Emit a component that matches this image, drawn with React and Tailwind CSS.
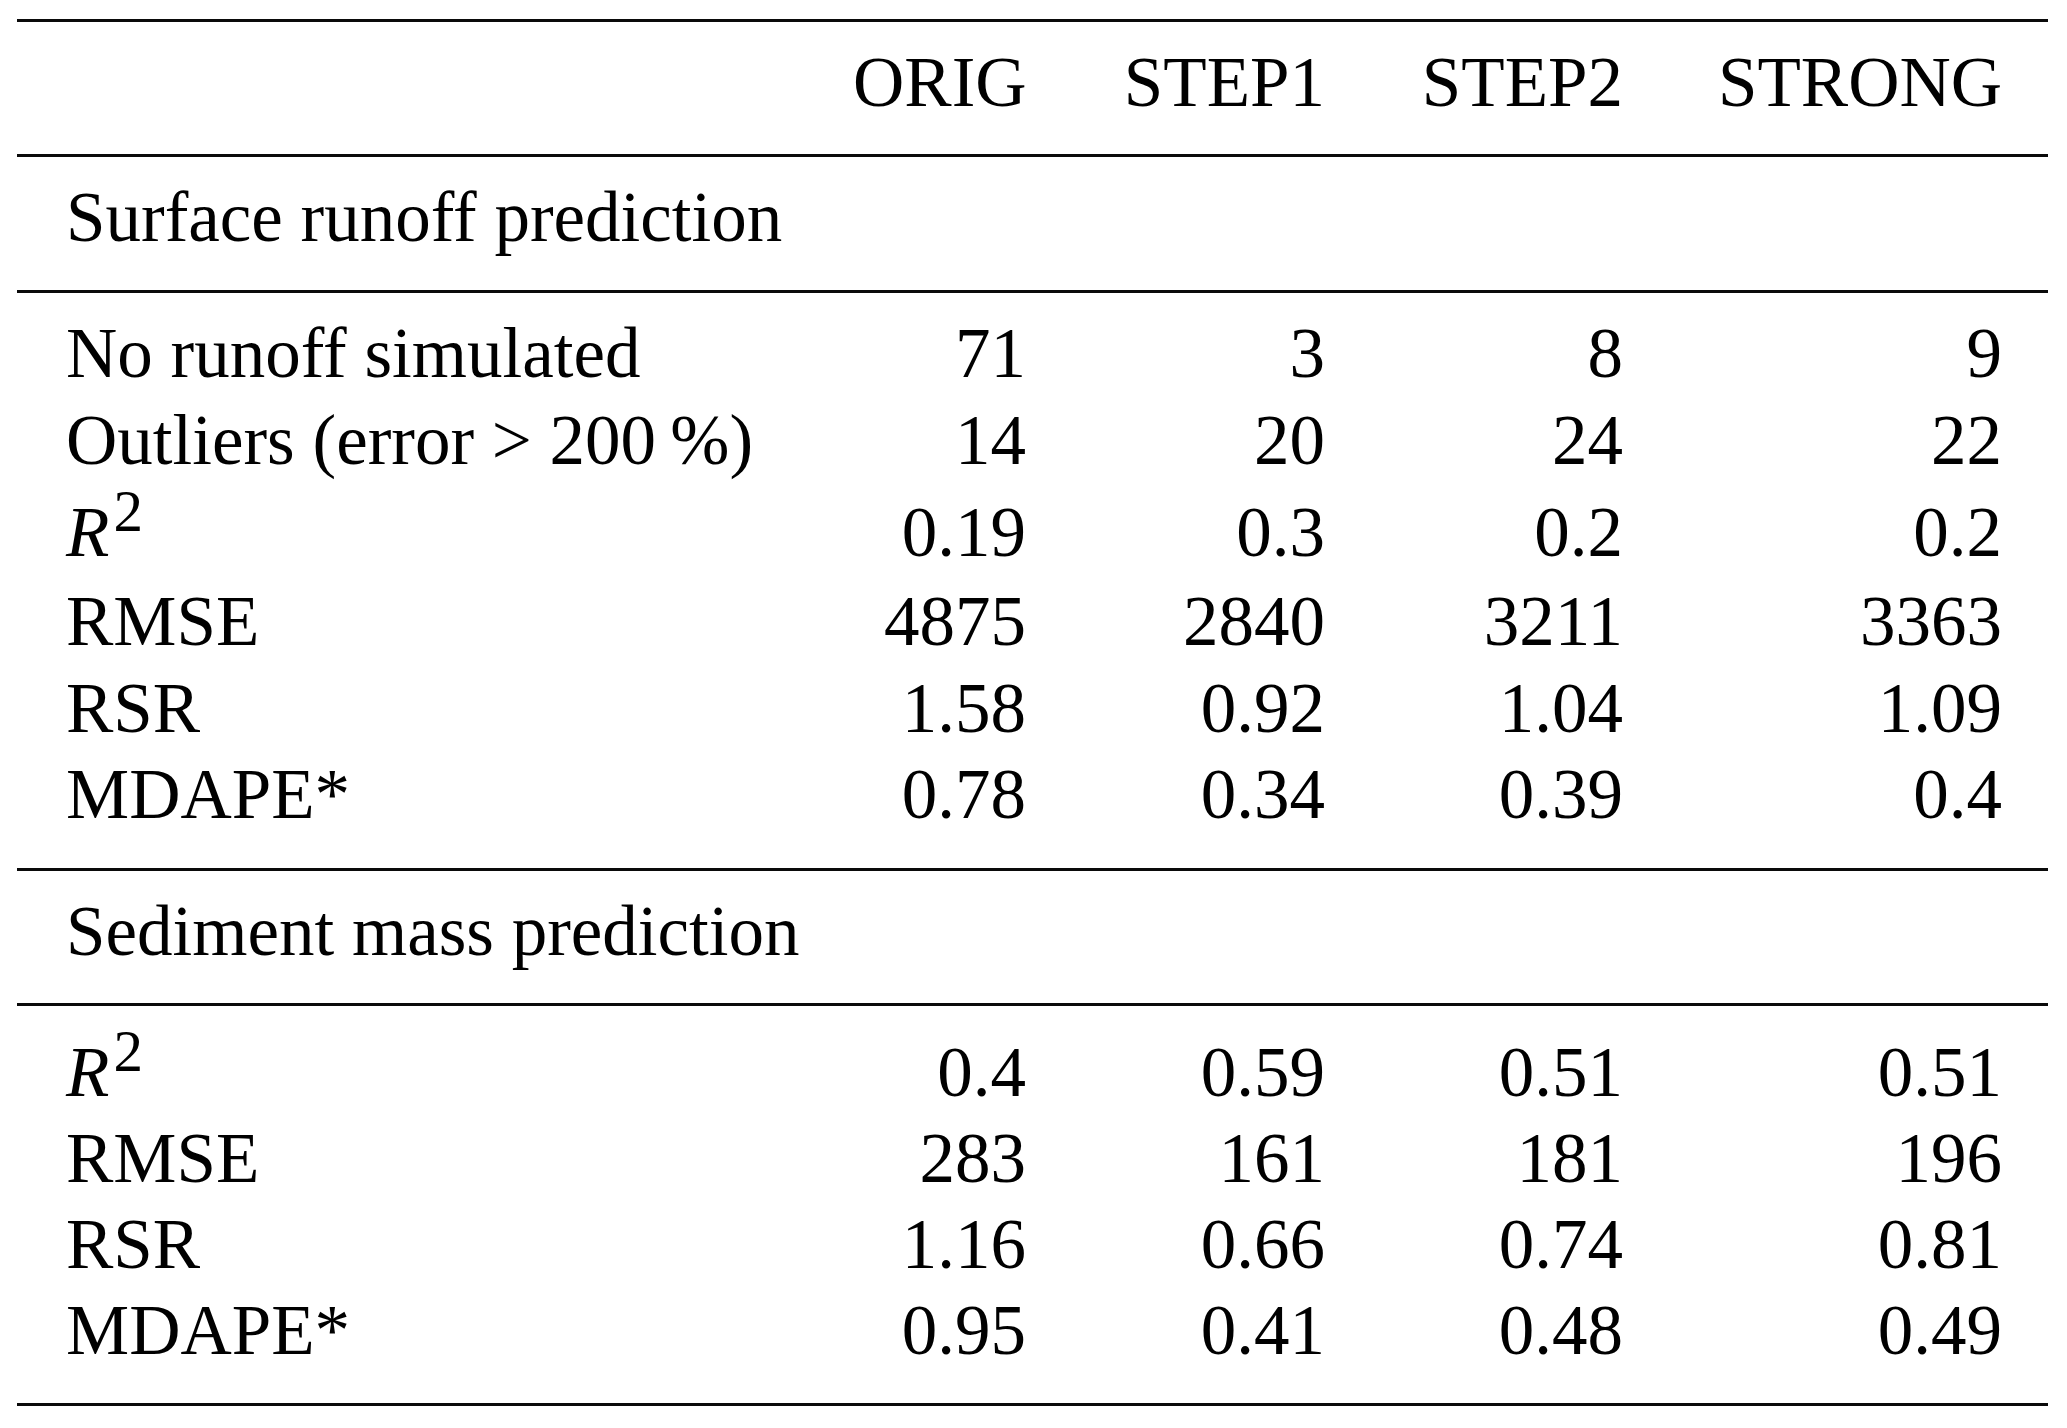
import React from "react";

const COLS = ["ORIG", "STEP1", "STEP2", "STRONG"];

function Rule({ mt }) {
  return <div className={`h-[3px] w-full bg-[#0a0a0a] ${mt}`} />;
}

function R2() {
  return (
    <span>
      <span className="italic">R</span>
      <span className="relative -top-[25px] ml-[4px] text-[59px] leading-none">2</span>
    </span>
  );
}

function Row({ label, values, h, mt }) {
  return (
    <div
      className={`grid grid-cols-[787px_173px_299px_298px_379px] pl-[49px] ${h} ${mt} leading-[88px] whitespace-nowrap`}
    >
      <div className="text-left">{label}</div>
      {values.map((v, i) => (
        <div key={i} className="text-right">
          {v}
        </div>
      ))}
    </div>
  );
}

export default function App() {
  return (
    <div className="w-[2067px] h-[1428px] bg-white pt-[19px] pl-[17px] text-black font-['Liberation_Serif','Times_New_Roman',serif] text-[71px]">
      <div className="w-[2031px]">
        <Rule mt="mt-0" />
        <Row label="" values={COLS} h="h-[88px]" mt="mt-[16px]" />
        <Rule mt="mt-[28px]" />
        <Row label="Surface runoff prediction" values={["", "", "", ""]} h="h-[88px]" mt="mt-[16px]" />
        <Rule mt="mt-[29px]" />
        <Row label="No runoff simulated" values={["71", "3", "8", "9"]} h="h-[87px]" mt="mt-[16px]" />
        <Row label={"Outliers (error > 200\u2009%)"} values={["14", "20", "24", "22"]} h="h-[92px]" mt="mt-0" />
        <Row label={<R2 />} values={["0.19", "0.3", "0.2", "0.2"]} h="h-[89px]" mt="mt-0" />
        <Row label="RMSE" values={["4875", "2840", "3211", "3363"]} h="h-[87px]" mt="mt-0" />
        <Row label="RSR" values={["1.58", "0.92", "1.04", "1.09"]} h="h-[86px]" mt="mt-0" />
        <Row label="MDAPE*" values={["0.78", "0.34", "0.39", "0.4"]} h="h-[88px]" mt="mt-0" />
        <Rule mt="mt-[30px]" />
        <Row label="Sediment mass prediction" values={["", "", "", ""]} h="h-[88px]" mt="mt-[16px]" />
        <Rule mt="mt-[28px]" />
        <Row label={<R2 />} values={["0.4", "0.59", "0.51", "0.51"]} h="h-[86px]" mt="mt-[22px]" />
        <Row label="RMSE" values={["283", "161", "181", "196"]} h="h-[86px]" mt="mt-0" />
        <Row label="RSR" values={["1.16", "0.66", "0.74", "0.81"]} h="h-[86px]" mt="mt-0" />
        <Row label="MDAPE*" values={["0.95", "0.41", "0.48", "0.49"]} h="h-[88px]" mt="mt-0" />
        <Rule mt="mt-[29px]" />
      </div>
    </div>
  );
}
